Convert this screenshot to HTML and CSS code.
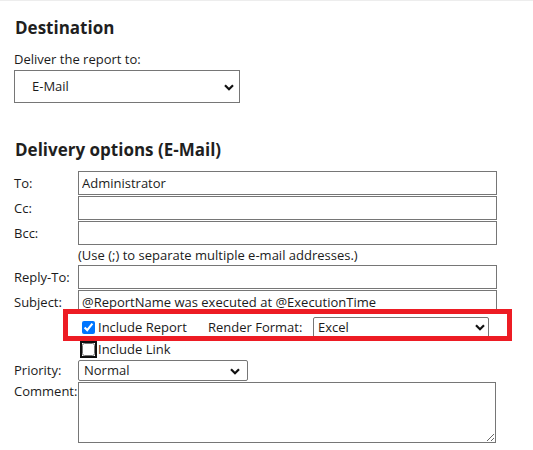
FILE: index.html
```html
<!DOCTYPE html>
<html lang="en">
<head>
<meta charset="utf-8">
<title>Report subscription</title>
<link rel="stylesheet" href="styles.css">
</head>
<body>
<div class="topbar"></div>
<main class="page">
  <section class="destination">
    <h2 class="section-title">Destination</h2>
    <label class="field-label" for="deliver">Deliver the report to:</label>
    <div class="select-wrap select-large">
      <select id="deliver" class="select"><option>E-Mail</option></select>
      <svg class="chevron" width="10" height="7" viewBox="0 0 10 7"><path d="M1 1.2 L5 5.2 L9 1.2" fill="none" stroke="#111" stroke-width="2.2"/></svg>
    </div>
  </section>

  <section class="delivery">
    <h2 class="section-title title-delivery">Delivery options (E-Mail)</h2>
    <div class="form-grid">
      <label class="row-label" for="to">To:</label>
      <input id="to" class="text-input" type="text" value="Administrator">

      <label class="row-label" for="cc">Cc:</label>
      <input id="cc" class="text-input" type="text" value="">

      <label class="row-label" for="bcc">Bcc:</label>
      <input id="bcc" class="text-input" type="text" value="">

      <span class="row-label"></span>
      <div class="note">(Use (;) to separate multiple e-mail addresses.)</div>

      <label class="row-label" for="reply">Reply-To:</label>
      <input id="reply" class="text-input" type="text" value="">

      <label class="row-label" for="subject">Subject:</label>
      <input id="subject" class="text-input" type="text" value="@ReportName was executed at @ExecutionTime">

      <span class="row-label"></span>
      <div class="report-row">
        <label class="check-label"><input class="check" type="checkbox" checked>Include Report</label>
        <span class="render-label">Render Format:</span>
        <div class="select-wrap select-render">
          <select class="select"><option>Excel</option></select>
          <svg class="chevron" width="10" height="7" viewBox="0 0 10 7"><path d="M1 1.2 L5 5.2 L9 1.2" fill="none" stroke="#111" stroke-width="2.2"/></svg>
        </div>
        <div class="highlight"></div>
      </div>

      <span class="row-label"></span>
      <div class="link-row">
        <label class="check-label"><input class="check check-focused" type="checkbox">Include Link</label>
      </div>

      <label class="row-label" for="priority">Priority:</label>
      <div class="select-wrap select-priority">
        <select id="priority" class="select"><option>Normal</option></select>
        <svg class="chevron" width="10" height="7" viewBox="0 0 10 7"><path d="M1 1.2 L5 5.2 L9 1.2" fill="none" stroke="#111" stroke-width="2.2"/></svg>
      </div>

      <label class="row-label label-top" for="comment">Comment:</label>
      <textarea id="comment" class="comment"></textarea>
    </div>
  </section>
</main>
</body>
</html>
```

FILE: styles.css
```css
* {
  box-sizing: border-box;
}

body {
  margin: 0;
  background: #ffffff;
  color: #1b1b1b;
  font-family: "Open Sans", "Noto Sans", "Liberation Sans", sans-serif;
  font-size: 13px;
  line-height: 17px;
}

.topbar {
  height: 1px;
  background: #ededed;
}

.page {
  padding: 0 14px;
}

.section-title {
  margin: 16px 0 0;
  font-size: 17px;
  line-height: 22px;
  font-weight: 700;
  color: #1f1f1f;
  padding-left: 1px;
}

.title-delivery {
  margin-top: 36px;
  margin-bottom: 10px;
}

.field-label {
  display: block;
  margin-top: 12px;
  margin-bottom: 2px;
}

.select-wrap {
  position: relative;
}

.select {
  appearance: none;
  -webkit-appearance: none;
  width: 100%;
  height: 100%;
  margin: 0;
  border: 1px solid #767676;
  border-radius: 0;
  background: #ffffff;
  color: #1b1b1b;
  font: inherit;
  outline: none;
}

.chevron {
  position: absolute;
  top: 50%;
  margin-top: -3px;
  pointer-events: none;
}

.select-large {
  width: 226px;
  height: 33px;
}

.select-large .select {
  padding: 0 0 0 17px;
}

.select-large .chevron {
  right: 6px;
}

.form-grid {
  display: grid;
  grid-template-columns: 64px 419px;
  grid-template-rows: 24px 24px 24px 18px 24px 24px 24px 19px 21px 61px;
  row-gap: 1px;
}

.row-label {
  display: flex;
  align-items: center;
  white-space: nowrap;
}

.label-top {
  align-items: flex-start;
  padding-top: 1px;
}

.text-input {
  width: 100%;
  height: 24px;
  margin: 0;
  padding: 0 3px;
  border: 1px solid #767676;
  background: #ffffff;
  color: #1b1b1b;
  font: inherit;
  outline: none;
}

.note {
  padding-top: 1px;
  line-height: 16px;
  white-space: nowrap;
}

.report-row {
  position: relative;
  display: grid;
  grid-template-columns: 130px 105px 176px;
  align-items: center;
}

.check-label {
  display: flex;
  align-items: center;
  white-space: nowrap;
}

.check {
  width: 13px;
  height: 13px;
  margin: 0 3px 0 4px;
}

.check-focused {
  outline: 2px solid #101010;
  outline-offset: 0;
  border-radius: 3px;
}

.render-label {
  white-space: nowrap;
}

.select-render {
  height: 21px;
}

.select-render .select {
  padding: 0 0 0 4px;
  border-radius: 2px;
}

.select-render .chevron {
  right: 4px;
}

.highlight {
  position: absolute;
  left: -15px;
  top: -6px;
  width: 449px;
  height: 32px;
  border: 5px solid #ed1c24;
  pointer-events: none;
}

.link-row {
  display: flex;
  align-items: center;
}

.select-priority {
  width: 170px;
  height: 21px;
}

.select-priority .select {
  padding: 0 0 0 5px;
  border-radius: 2px;
}

.select-priority .chevron {
  right: 8px;
}

.comment {
  width: 418px;
  height: 61px;
  margin: 0;
  padding: 2px 3px;
  border: 1px solid #767676;
  font: inherit;
  resize: both;
  outline: none;
}
```
